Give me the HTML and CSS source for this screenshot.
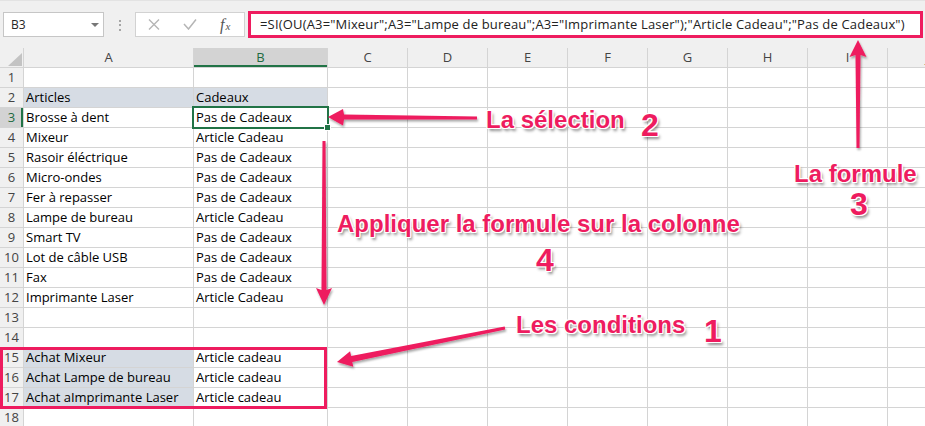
FILE: index.html
```html
<!DOCTYPE html>
<html lang="fr">
<head>
<meta charset="utf-8">
<title>Excel SI OU</title>
<link rel="stylesheet" href="styles.css">
</head>
<body>
<div class="app">
  <div class="toolbar">
    <div class="namebox"><span>B3</span><svg class="dd" width="8" height="4" viewBox="0 0 8 4"><path d="M0 0H8L4 4Z" fill="#777"/></svg></div>
    <div class="dots"><span></span><span></span><span></span></div>
    <div class="fxbox">
      <svg width="12" height="11" viewBox="0 0 12 11"><path d="M1 0.5L11 10.5M11 0.5L1 10.5" stroke="#b5b5b5" stroke-width="1.4" fill="none"/></svg>
      <svg width="14" height="11" viewBox="0 0 14 11"><path d="M1 5L5.5 10L13 0.5" stroke="#b5b5b5" stroke-width="1.5" fill="none"/></svg>
      <span class="fx"><span class="f">f</span><span class="x">x</span></span>
    </div>
    <div class="formula">=SI(OU(A3="Mixeur";A3="Lampe de bureau";A3="Imprimante Laser");"Article Cadeau";"Pas de Cadeaux")</div>
  </div>

  <div class="sheet">
    <div class="hd corner"><svg width="14" height="13" viewBox="0 0 14 13"><path d="M14 0V13H0Z" fill="#c3c3c3"/></svg></div>
    <div class="hd">A</div><div class="hd sel-col">B</div><div class="hd">C</div><div class="hd">D</div><div class="hd">E</div><div class="hd">F</div><div class="hd">G</div><div class="hd">H</div><div class="hd">I</div><div class="hd">J</div>

    <div class="rn">1</div><div></div><div></div><div></div><div></div><div></div><div></div><div></div><div></div><div></div><div></div>
    <div class="rn">2</div><div class="hl">Articles</div><div class="hl">Cadeaux</div><div></div><div></div><div></div><div></div><div></div><div></div><div></div><div></div>
    <div class="rn sel-row">3</div><div>Brosse à dent</div><div class="active">Pas de Cadeaux</div><div></div><div></div><div></div><div></div><div></div><div></div><div></div><div></div>
    <div class="rn">4</div><div>Mixeur</div><div>Article Cadeau</div><div></div><div></div><div></div><div></div><div></div><div></div><div></div><div></div>
    <div class="rn">5</div><div>Rasoir éléctrique</div><div>Pas de Cadeaux</div><div></div><div></div><div></div><div></div><div></div><div></div><div></div><div></div>
    <div class="rn">6</div><div>Micro-ondes</div><div>Pas de Cadeaux</div><div></div><div></div><div></div><div></div><div></div><div></div><div></div><div></div>
    <div class="rn">7</div><div>Fer à repasser</div><div>Pas de Cadeaux</div><div></div><div></div><div></div><div></div><div></div><div></div><div></div><div></div>
    <div class="rn">8</div><div>Lampe de bureau</div><div>Article Cadeau</div><div></div><div></div><div></div><div></div><div></div><div></div><div></div><div></div>
    <div class="rn">9</div><div>Smart TV</div><div>Pas de Cadeaux</div><div></div><div></div><div></div><div></div><div></div><div></div><div></div><div></div>
    <div class="rn">10</div><div>Lot de câble USB</div><div>Pas de Cadeaux</div><div></div><div></div><div></div><div></div><div></div><div></div><div></div><div></div>
    <div class="rn">11</div><div>Fax</div><div>Pas de Cadeaux</div><div></div><div></div><div></div><div></div><div></div><div></div><div></div><div></div>
    <div class="rn">12</div><div>Imprimante Laser</div><div>Article Cadeau</div><div></div><div></div><div></div><div></div><div></div><div></div><div></div><div></div>
    <div class="rn">13</div><div></div><div></div><div></div><div></div><div></div><div></div><div></div><div></div><div></div><div></div>
    <div class="rn">14</div><div></div><div></div><div></div><div></div><div></div><div></div><div></div><div></div><div></div><div></div>
    <div class="rn">15</div><div class="hl">Achat Mixeur</div><div>Article cadeau</div><div></div><div></div><div></div><div></div><div></div><div></div><div></div><div></div>
    <div class="rn">16</div><div class="hl">Achat Lampe de bureau</div><div>Article cadeau</div><div></div><div></div><div></div><div></div><div></div><div></div><div></div><div></div>
    <div class="rn">17</div><div class="hl">Achat aImprimante Laser</div><div>Article cadeau</div><div></div><div></div><div></div><div></div><div></div><div></div><div></div><div></div>
    <div class="rn">18</div><div></div><div></div><div></div><div></div><div></div><div></div><div></div><div></div><div></div><div></div>
  </div>

  <svg class="overlay" width="925" height="426" viewBox="0 0 925 426">
    <defs>
      <filter id="sh" x="-10%" y="-10%" width="130%" height="130%">
        <feDropShadow dx="1" dy="2" stdDeviation="1.2" flood-color="#000" flood-opacity="0.35"/>
      </filter>
    </defs>
    <g fill="#ee1c5f" filter="url(#sh)">
      <polygon points="477,116.5 344,114.5 343,109 328,117 343,125.5 344,119.5 477,119.5"/>
      <polygon points="322.5,141 321.5,290 316,288 324,305 332,288 326.5,290 325.5,141"/>
      <polygon points="859.5,148 860.5,55 866.5,57 858,40 849.5,57 855.5,55 856.5,148"/>
      <polygon points="504.7,326.5 351.1,356.1 350.1,351.2 337,362 353.3,366.8 352.3,361.9 505.3,329.5"/>
    </g>
    <rect x="1.5" y="348.5" width="324" height="59" fill="none" stroke="#ee1c5f" stroke-width="3"/>
  </svg>

  <div class="note n-sel">La sélection</div>
  <div class="note num n-2">2</div>
  <div class="note n-app">Appliquer la formule sur la colonne</div>
  <div class="note num n-4">4</div>
  <div class="note n-cond">Les conditions</div>
  <div class="note num n-1">1</div>
  <div class="note n-form">La formule</div>
  <div class="note num n-3">3</div>
</div>
</body>
</html>
```

FILE: styles.css
```css
html, body {
  margin: 0;
  padding: 0;
  background: #fff;
  overflow: hidden;
}

body {
  font-family: "Open Sans", "Noto Sans", sans-serif;
  color: #000;
}

.app {
  position: relative;
  width: 925px;
  height: 426px;
  overflow: hidden;
}

/* ---------- formula toolbar ---------- */
.toolbar {
  height: 48px;
  box-sizing: border-box;
  background: #f0f0f0;
  border-top: 1px solid #e3e3e3;
  padding-top: 11px;
  display: flex;
  align-items: flex-start;
}

.namebox {
  width: 101px;
  height: 25px;
  box-sizing: border-box;
  margin-left: 3px;
  background: #fff;
  border: 1px solid #c6c6c6;
  display: flex;
  align-items: center;
  justify-content: space-between;
  padding: 0 4px 0 7px;
  font-size: 12px;
  color: #262626;
}

.dots {
  margin-left: 15px;
  margin-top: 8px;
  display: flex;
  flex-direction: column;
  gap: 2.3px;
}

.dots span {
  width: 2px;
  height: 2px;
  background: #a6a6a6;
}

.fxbox {
  width: 110px;
  height: 25px;
  box-sizing: border-box;
  margin-left: 14px;
  background: #fff;
  border: 1px solid #d2d2d2;
  display: flex;
  align-items: center;
  gap: 23px;
  padding-left: 12px;
}

.fx {
  font-family: "Liberation Serif", serif;
  font-style: italic;
  color: #555;
  display: flex;
  align-items: baseline;
}

.fx .f {
  font-size: 16px;
}

.fx .x {
  font-size: 11px;
  margin-left: 1px;
}

.formula {
  width: 675px;
  height: 27px;
  box-sizing: border-box;
  margin-left: 3px;
  margin-top: -1px;
  background: #fff;
  border: 3px solid #ee1c5f;
  padding-left: 9px;
  font-size: 13px;
  letter-spacing: 0.17px;
  line-height: 21px;
  color: #222;
  white-space: nowrap;
  overflow: hidden;
}

/* ---------- sheet grid ---------- */
.sheet {
  display: grid;
  grid-template-columns: 23px 169px 133px repeat(8, 79px);
  grid-auto-rows: 19px;
  gap: 1px;
  background: #d4d4d4;
  font-size: 13px;
  line-height: 19px;
}

.sheet > div {
  background: #fff;
  padding-left: 2px;
  white-space: nowrap;
  overflow: visible;
}

.sheet > .hd {
  background: #f0f0f0;
  color: #444;
  text-align: center;
  padding-left: 0;
}

.sheet > .corner {
  display: flex;
  align-items: flex-end;
  justify-content: flex-end;
  padding: 0 1px 1px 0;
  box-sizing: border-box;
}

.sheet > .sel-col {
  background: #d3d3d3;
  color: #1e6b41;
  box-shadow: inset 0 -2px 0 #217346;
}

.sheet > .rn {
  background: #f0f0f0;
  color: #444;
  text-align: center;
  padding-left: 0;
}

.sheet > .sel-row {
  background: #d3d3d3;
  color: #1e6b41;
  box-shadow: inset -2px 0 0 #217346;
}

.sheet > .hl {
  background: #d6dce4;
}

.sheet > .active {
  position: relative;
  z-index: 1;
  outline: 2px solid #217346;
}

.sheet > .active::after {
  content: "";
  position: absolute;
  right: -4px;
  bottom: -4px;
  width: 5px;
  height: 5px;
  background: #217346;
  border: 1px solid #fff;
}

/* ---------- annotations ---------- */
.overlay {
  position: absolute;
  left: 0;
  top: 0;
  z-index: 5;
  pointer-events: none;
}

.note {
  position: absolute;
  z-index: 6;
  font-family: "Liberation Sans", Arial, sans-serif;
  font-weight: bold;
  font-size: 24px;
  line-height: 24px;
  color: #ee1c5f;
  white-space: nowrap;
  text-shadow:
    -1px -1px 0 #fff, 1px -1px 0 #fff, -1px 1px 0 #fff, 1px 1px 0 #fff,
    0 -1px 0 #fff, 0 1px 0 #fff, -1px 0 0 #fff, 1px 0 0 #fff,
    2px 3px 3px rgba(0, 0, 0, 0.45);
}

.num {
  font-size: 32px;
  line-height: 32px;
}

.n-sel { left: 486px; top: 108px; }
.n-2 { left: 641px; top: 109px; }
.n-app { left: 337px; top: 212px; }
.n-4 { left: 536px; top: 244px; }
.n-cond { left: 516px; top: 313px; }
.n-1 { left: 704px; top: 315px; }
.n-form { left: 794px; top: 162px; }
.n-3 { left: 850px; top: 188px; }
```
